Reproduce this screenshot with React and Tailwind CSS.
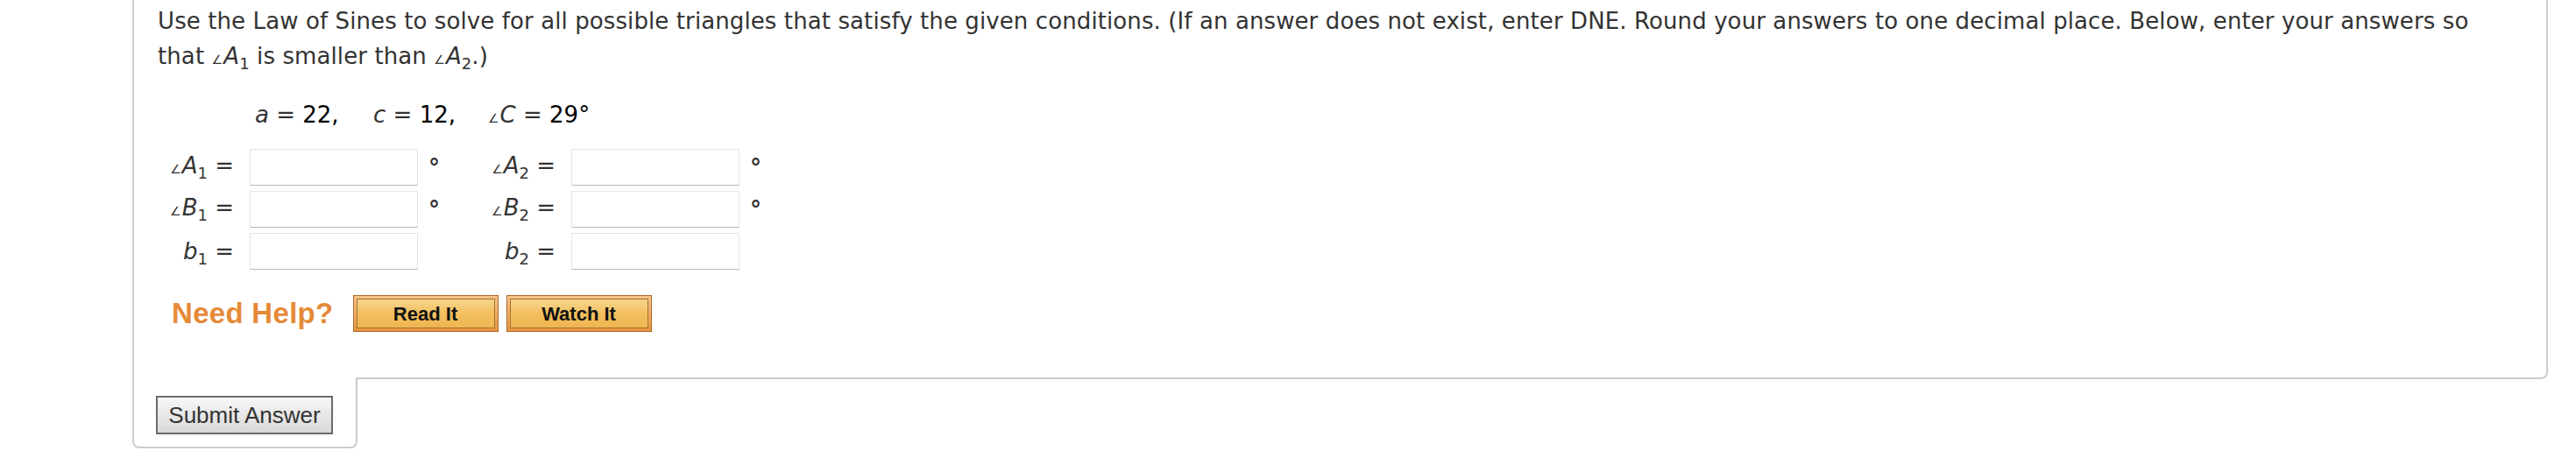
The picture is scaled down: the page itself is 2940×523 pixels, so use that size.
import React from 'react';

function Ang() {
  return <span className="text-[14px] not-italic mr-[1px]">∠</span>;
}

function Sym({ letter, sub }) {
  return (
    <span className="whitespace-nowrap">
      <Ang />
      <i>{letter}</i>
      <sub className="text-[18px] not-italic -bottom-[6px]">{sub}</sub>
    </span>
  );
}

function AnswerBox() {
  return (
    <input
      type="text"
      className="w-[192px] h-[42px] border border-[#e4e4e4] border-b-[#b8b8b8] bg-white outline-none px-2"
    />
  );
}

function HelpButton({ label }) {
  return (
    <button
      type="button"
      className="w-[166px] h-[42px] border border-[#a8692b] bg-linear-to-b from-[#f6c489] to-[#e8953c] p-[3px]"
    >
      <span className="flex h-full items-center justify-center border border-[#a5712f] bg-linear-to-b from-[#f6d58e] via-[#f2bf5e] to-[#efb652] text-[22px] font-bold text-[#111] font-['Liberation_Sans',Arial,sans-serif]">
        {label}
      </span>
    </button>
  );
}

export default function App() {
  const rows = [
    { l1: <Sym letter="A" sub="1" />, l2: <Sym letter="A" sub="2" />, deg: true },
    { l1: <Sym letter="B" sub="1" />, l2: <Sym letter="B" sub="2" />, deg: true },
    {
      l1: (
        <span>
          <i>b</i>
          <sub className="text-[18px] -bottom-[6px]">1</sub>
        </span>
      ),
      l2: (
        <span>
          <i>b</i>
          <sub className="text-[18px] -bottom-[6px]">2</sub>
        </span>
      ),
      deg: false,
    },
  ];

  return (
    <div className="w-[2940px] h-[523px] bg-white font-['DejaVu_Sans',Verdana,sans-serif] text-[26px] text-[#333]">
      {/* question card */}
      <div className="ml-[151px] w-[2757px] border-x-2 border-b-2 border-[#cccccc] rounded-br-[8px] pl-[27px] pr-[10px] pt-[4px] pb-[52px]">
        <p className="leading-[40px] tracking-[0.1px]">
          Use the Law of Sines to solve for all possible triangles that satisfy the given conditions. (If an
          answer does not exist, enter DNE. Round your answers to one decimal place. Below, enter your answers so
          <br />
          that <Sym letter="A" sub="1" /> is smaller than <Sym letter="A" sub="2" />.)
        </p>

        <div className="mt-[23px] leading-[40px] flex pl-[111px] whitespace-nowrap">
          <span className="w-[135px]">
            <i>a</i> = <span className="text-black">22,</span>
          </span>
          <span className="w-[131px]">
            <i>c</i> = <span className="text-black">12,</span>
          </span>
          <span>
            <Ang />
            <i>C</i> = <span className="text-black">29°</span>
          </span>
        </div>

        <div className="mt-[15px] flex flex-col gap-[6px]">
          {rows.map((r, i) => (
            <div key={i} className="flex items-center h-[42px] leading-[40px]">
              <div className="w-[87px] text-right whitespace-nowrap">{r.l1} =</div>
              <div className="ml-[18px]">
                <AnswerBox />
              </div>
              <div className="w-[82px] pl-[12px] font-bold">{r.deg ? '°' : ''}</div>
              <div className="w-[75px] text-right whitespace-nowrap">{r.l2} =</div>
              <div className="ml-[18px]">
                <AnswerBox />
              </div>
              <div className="pl-[12px] font-bold">{r.deg ? '°' : ''}</div>
            </div>
          ))}
        </div>

        <div className="mt-[29px] flex items-center h-[42px] pl-[16px]">
          <span className="font-['Liberation_Sans',Arial,sans-serif] font-bold text-[33px] leading-[42px] tracking-[0.3px] text-[#e58a38] mr-[22px]">
            Need Help?
          </span>
          <HelpButton label="Read It" />
          <div className="ml-[9px]">
            <HelpButton label="Watch It" />
          </div>
        </div>
      </div>

      {/* submit tab */}
      <div className="relative ml-[151px] -mt-[2px] w-[257px] bg-white border-x-2 border-b-2 border-[#cccccc] rounded-b-[8px] pt-[21px] pb-[14px] pl-[25px]">
        <button
          type="button"
          className="w-[202px] h-[44px] border-2 border-[#6b6b6b] bg-linear-to-b from-[#f7f7f7] to-[#d9d9d9] text-[26px] text-[#333] font-['Liberation_Sans',Arial,sans-serif] leading-none"
        >
          Submit Answer
        </button>
      </div>
    </div>
  );
}
